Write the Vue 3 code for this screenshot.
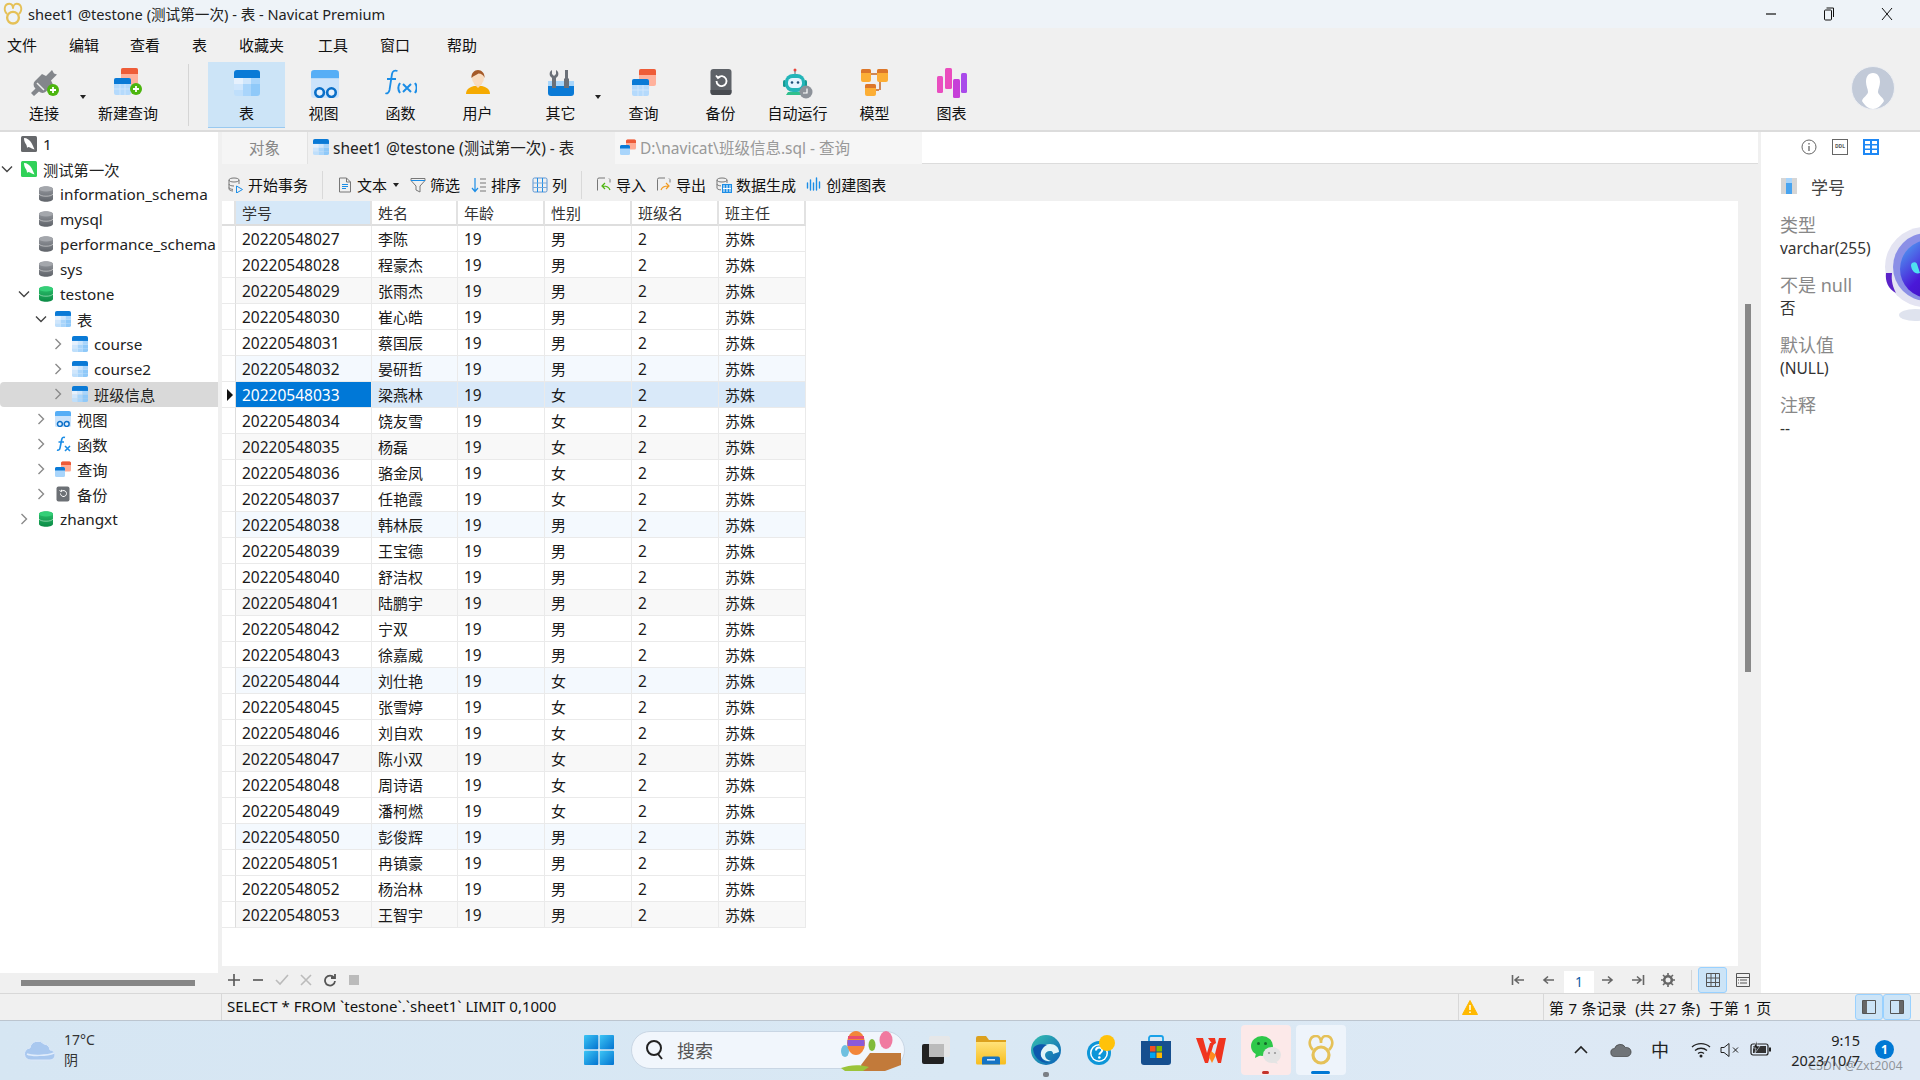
<script setup>
const menus = [
  { text: '文件', cls: 'm1' }, { text: '编辑', cls: 'm7' }, { text: '查看', cls: 'm2' }, { text: '表', cls: 'm3' },
  { text: '收藏夹', cls: 'm3' }, { text: '工具', cls: 'm4' }, { text: '窗口', cls: 'm5' }, { text: '帮助', cls: 'm6' }
]

const tools = [
  { icon: 't-tbl', text: '表', active: true },
  { icon: 't-view', text: '视图' },
  { icon: 't-fx', text: '函数' },
  { icon: 't-user', text: '用户' },
  { icon: 't-other', text: '其它', wide: true },
  { icon: 't-qry', text: '查询' },
  { icon: 't-bak', text: '备份' },
  { icon: 't-bot', text: '自动运行' },
  { icon: 't-model', text: '模型' },
  { icon: 't-chart', text: '图表' }
]

const tree = [
  { text: '1', lv: 0, icon: 'conn-grey' },
  { text: '测试第一次', lv: 0, icon: 'conn-green', chev: 'down' },
  { text: 'information_schema', lv: 1, icon: 'db-grey' },
  { text: 'mysql', lv: 1, icon: 'db-grey' },
  { text: 'performance_schema', lv: 1, icon: 'db-grey' },
  { text: 'sys', lv: 1, icon: 'db-grey' },
  { text: 'testone', lv: 1, icon: 'db-green', chev: 'down' },
  { text: '表', lv: 2, icon: 'tbl', chev: 'down' },
  { text: 'course', lv: 3, icon: 'tbl', chev: 'right' },
  { text: 'course2', lv: 3, icon: 'tbl', chev: 'right' },
  { text: '班级信息', lv: 3, icon: 'tbl', chev: 'right', selected: true },
  { text: '视图', lv: 2, icon: 'view', chev: 'right' },
  { text: '函数', lv: 2, icon: 'fx-s', chev: 'right' },
  { text: '查询', lv: 2, icon: 'qry-s', chev: 'right' },
  { text: '备份', lv: 2, icon: 'bak-s', chev: 'right' },
  { text: 'zhangxt', lv: 1, icon: 'db-green', chev: 'right' }
]

const actions = [
  [{ icon: 'a-tx', text: '开始事务' }],
  [
    { icon: 'a-doc', text: '文本', arrow: true },
    { icon: 'a-filter', text: '筛选' },
    { icon: 'a-sort', text: '排序' },
    { icon: 'a-cols', text: '列' }
  ],
  [
    { icon: 'a-imp', text: '导入' },
    { icon: 'a-exp', text: '导出' },
    { icon: 'a-gen', text: '数据生成' },
    { icon: 'a-wave', text: '创建图表' }
  ]
]

const columns = ['学号', '姓名', '年龄', '性别', '班级名', '班主任']

const students = [
  ['李陈', '男'], ['程豪杰', '男'], ['张雨杰', '男'], ['崔心皓', '男'], ['蔡国辰', '男'], ['晏研哲', '男'],
  ['梁燕林', '女'], ['饶友雪', '女'], ['杨磊', '女'], ['骆金凤', '女'], ['任艳霞', '女'], ['韩林辰', '男'],
  ['王宝德', '男'], ['舒洁权', '男'], ['陆鹏宇', '男'], ['宁双', '男'], ['徐嘉威', '男'], ['刘仕艳', '女'],
  ['张雪婷', '女'], ['刘自欢', '女'], ['陈小双', '女'], ['周诗语', '女'], ['潘柯燃', '女'], ['彭俊辉', '男'],
  ['冉镇豪', '男'], ['杨治林', '男'], ['王智宇', '男']
]

const rows = students.map((s, i) => ({
  id: String(20220548027 + i),
  name: s[0],
  sex: s[1],
  selected: i === 6,
  tint: i % 6 === 2 ? 'grey' : i % 6 === 5 ? 'blue' : ''
}))

const details = [
  { label: '类型', value: 'varchar(255)' },
  { label: '不是 null', value: '否' },
  { label: '默认值', value: '(NULL)' },
  { label: '注释', value: '--' }
]

const taskIcons = [
  { icon: 'b-task' }, { icon: 'b-folder' }, { icon: 'b-edge', dot: 'grey' }, { icon: 'b-help' },
  { icon: 'b-store' }, { icon: 'b-wps' }, { icon: 'b-wechat', cls: 'pink', dot: 'red' }, { icon: 'nav', cls: 'open', dot: 'blue' }
]
</script>

<template>
  <div class="screen">
    <svg class="defs" width="0" height="0">
      <defs>
        <linearGradient id="gGrey" x1="0" y1="0" x2="0" y2="1"><stop offset="0" stop-color="#9a9da3"/><stop offset="1" stop-color="#5f6369"/></linearGradient>
        <linearGradient id="gGreen" x1="0" y1="0" x2="0" y2="1"><stop offset="0" stop-color="#2fc46f"/><stop offset="1" stop-color="#0b8a45"/></linearGradient>
        <linearGradient id="gEdge" x1="0" y1="0" x2="1" y2="1"><stop offset="0" stop-color="#35c1b0"/><stop offset="1" stop-color="#0a5fb8"/></linearGradient>
        <linearGradient id="gFolder" x1="0" y1="0" x2="0" y2="1"><stop offset="0" stop-color="#ffe27a"/><stop offset="1" stop-color="#f7bd1e"/></linearGradient>
        <linearGradient id="gWin" x1="0" y1="0" x2="1" y2="1"><stop offset="0" stop-color="#3cc5f5"/><stop offset="1" stop-color="#0373d0"/></linearGradient>
        <linearGradient id="gBot" x1="0" y1="0" x2="1" y2="1"><stop offset="0" stop-color="#4fb0f5"/><stop offset="0.5" stop-color="#4a18d8"/><stop offset="1" stop-color="#3a10b0"/></linearGradient>
      </defs>

      <symbol id="tbl" viewBox="0 0 26 26">
        <path d="M3 0h20a3 3 0 0 1 3 3v5H0V3a3 3 0 0 1 3-3z" fill="#0a7ad6"/>
        <path d="M0 8h9v6H0z" fill="#e6f1fd"/><path d="M9 8h8v6H9z" fill="#cfe6fc"/><path d="M17 8h9v6h-9z" fill="#a9d5fb"/>
        <path d="M0 14h9v6H0z" fill="#cfe6fc"/><path d="M9 14h8v6H9z" fill="#a9d5fb"/><path d="M17 14h9v6h-9z" fill="#8fc9f9"/>
        <path d="M0 20h9v6H3a3 3 0 0 1-3-3z" fill="#bfdffb"/><path d="M9 20h8v6H9z" fill="#a9d5fb"/><path d="M17 20h9v3a3 3 0 0 1-3 3h-6z" fill="#8fc9f9"/>
      </symbol>
      <symbol id="view" viewBox="0 0 26 26">
        <path d="M3 0h20a3 3 0 0 1 3 3v5H0V3a3 3 0 0 1 3-3z" fill="#56aef6"/>
        <path d="M0 8h26v15a3 3 0 0 1-3 3H3a3 3 0 0 1-3-3z" fill="#cbe3fb"/>
        <circle cx="8" cy="21" r="4" fill="#e6f1fd" stroke="#0a6fc8" stroke-width="2.400"/>
        <circle cx="19" cy="21" r="4" fill="#e6f1fd" stroke="#0a6fc8" stroke-width="2.400"/>
      </symbol>
      <symbol id="fx-s" viewBox="0 0 16 16">
        <path d="M10 1.500c-2-.6-3 .4-3.300 2L5 12c-.4 2-1.600 2.500-3 2M3.500 6h5.500" fill="none" stroke="#1b8de6" stroke-width="1.600"/>
        <path d="M10 10l5 5M15 10l-5 5" stroke="#1b8de6" stroke-width="1.600"/>
      </symbol>
      <symbol id="qry-s" viewBox="0 0 16 16">
        <rect x="6" y="0.500" width="10" height="10" rx="1.500" fill="#ffab94"/><path d="M6 2a1.500 1.500 0 0 1 1.500-1.500h7A1.500 1.500 0 0 1 16 2v2H6z" fill="#ec5a38"/>
        <rect x="0" y="6" width="10" height="10" rx="1.500" fill="#a9d5fb"/><path d="M0 7.500A1.500 1.500 0 0 1 1.500 6h7A1.500 1.500 0 0 1 10 7.500V9.500H0z" fill="#0a7ad6"/>
      </symbol>
      <symbol id="bak-s" viewBox="0 0 16 16">
        <rect x="1.500" y="0.500" width="13" height="15" rx="2" fill="#6c7075"/>
        <path d="M5.500 7.500a3 3 0 1 0 1-2.200M4.500 4.500l1.800 1.200 .4-2" fill="none" stroke="#fff" stroke-width="1"/>
      </symbol>
      <symbol id="conn-grey" viewBox="0 0 16 16">
        <rect width="16" height="16" rx="1.500" fill="#66686b"/>
        <path d="M3 2c3 0 6 2 7.500 5 1 2 2 4 3 6.500-2-1-3.500-1-4.500-2C7 10 6 12 6 12c0-2-.5-3-1.500-4.500C3.500 6 3 4 3 2z" fill="#fff"/>
      </symbol>
      <symbol id="conn-green" viewBox="0 0 16 16">
        <rect width="16" height="16" rx="1.500" fill="#30d158"/>
        <path d="M3 2c3 0 6 2 7.500 5 1 2 2 4 3 6.500-2-1-3.500-1-4.500-2C7 10 6 12 6 12c0-2-.5-3-1.500-4.500C3.500 6 3 4 3 2z" fill="#fff"/>
      </symbol>
      <symbol id="db-grey" viewBox="0 0 16 16">
        <path d="M1 3c0-1.600 3-2.800 7-2.800s7 1.200 7 2.800v10c0 1.600-3 2.800-7 2.800s-7-1.200-7-2.800z" fill="url(#gGrey)"/>
        <ellipse cx="8" cy="3" rx="7" ry="2.600" fill="#a4a7ac"/>
        <path d="M1 8c1 1.500 3.500 2.200 7 2.200s6-.7 7-2.200" fill="none" stroke="#e4e4e4" stroke-width=".6"/>
      </symbol>
      <symbol id="db-green" viewBox="0 0 16 16">
        <path d="M1 3c0-1.600 3-2.800 7-2.800s7 1.200 7 2.800v10c0 1.600-3 2.800-7 2.800s-7-1.200-7-2.800z" fill="url(#gGreen)"/>
        <ellipse cx="8" cy="3" rx="7" ry="2.600" fill="#35cf78"/>
        <path d="M1 8c1 1.500 3.500 2.200 7 2.200s6-.7 7-2.200" fill="none" stroke="#c9f0d9" stroke-width=".6"/>
      </symbol>
      <symbol id="chev-down" viewBox="0 0 12 12"><path d="M1 3.500L6 8.500l5-5" fill="none" stroke="#444" stroke-width="1.400"/></symbol>
      <symbol id="chev-right" viewBox="0 0 12 12"><path d="M3.500 1L8.500 6l-5 5" fill="none" stroke="#8a8a8a" stroke-width="1.400"/></symbol>

      <symbol id="t-conn" viewBox="0 0 32 32">
        <path d="M24 2l-6 6-4-2-7 7a5 5 0 0 0 0 7l.5.500L3 25l3 3 5-4.500a5 5 0 0 0 7 0l7-7-2-4 6-6-3-1z" fill="#83868b"/>
        <path d="M9 15l7 7" stroke="#f0f0f0" stroke-width="1.500"/>
        <circle cx="25" cy="22" r="6" fill="#4cb50e"/><path d="M25 19v6M22 22h6" stroke="#fff" stroke-width="1.800"/>
      </symbol>
      <symbol id="t-new" viewBox="0 0 32 32">
        <rect x="9" y="0" width="17" height="17" rx="2" fill="#ffb19c"/><path d="M9 2a2 2 0 0 1 2-2h13a2 2 0 0 1 2 2v4H9z" fill="#ee5c38"/>
        <rect x="2" y="10" width="17" height="17" rx="2" fill="#b5dafc"/><path d="M2 12a2 2 0 0 1 2-2h13a2 2 0 0 1 2 2v4H2z" fill="#0a7ad6"/>
        <path d="M8 16v11M13 16v11M2 21h17" stroke="#d7eafd" stroke-width=".8"/>
        <circle cx="24" cy="21" r="6" fill="#4cb50e"/><path d="M24 18v6M21 21h6" stroke="#fff" stroke-width="1.800"/>
      </symbol>
      <symbol id="t-tbl" viewBox="0 0 32 32"><use href="#tbl" x="3" y="2" width="26" height="26"/></symbol>
      <symbol id="t-view" viewBox="0 0 32 32"><use href="#view" x="3" y="2" width="28" height="28"/></symbol>
      <symbol id="t-fx" viewBox="0 0 32 32">
        <path d="M12.500 3c-3-1-5 0-5.500 3L4.500 22c-.6 3-2.500 4-4 3M2 11h9" fill="none" stroke="#1b8de6" stroke-width="1.800"/>
        <path d="M15 15c-2 3-2 7 0 10M30 15c2 3 2 7 0 10M18 16l8 8M26 16l-8 8" fill="none" stroke="#1b8de6" stroke-width="2"/>
      </symbol>
      <symbol id="t-user" viewBox="0 0 32 32">
        <path d="M4 26c0-5 4-7 8-8h8c4 1 8 3 8 8z" fill="#f5aa00"/>
        <path d="M12 16l4 4 4-4v-2h-8z" fill="#f8d9b8"/>
        <ellipse cx="16" cy="10" rx="6" ry="7" fill="#f9dcc0"/>
        <path d="M9.500 10c-.5-5 3-8 6.500-8s7 3 6.500 8c-1-3-3-4.500-6-4.500-2 1.500-5 2-7 4.500z" fill="#a55a28"/>
      </symbol>
      <symbol id="t-other" viewBox="0 0 32 32">
        <path d="M3 13h26v6H3z" fill="#a8d6fb"/>
        <path d="M3 18h26v7a3 3 0 0 1-3 3H6a3 3 0 0 1-3-3z" fill="#0a7ad6"/>
        <path d="M11 2v4l-2 2-2-2V2C5 3 4 5 5 8l2 2v10h4V10l2-2c1-3 0-5-2-6z" fill="#6a7078"/>
        <path d="M20 2h3v8l1 1v9h-5v-9l1-1z" fill="#6a7078"/>
      </symbol>
      <symbol id="t-qry" viewBox="0 0 32 32">
        <rect x="11" y="1" width="17" height="17" rx="2" fill="#ffb19c"/><path d="M11 3a2 2 0 0 1 2-2h13a2 2 0 0 1 2 2v4H11z" fill="#ee5c38"/>
        <rect x="4" y="11" width="17" height="17" rx="2" fill="#b5dafc"/><path d="M4 13a2 2 0 0 1 2-2h13a2 2 0 0 1 2 2v4H4z" fill="#0a7ad6"/>
        <path d="M10 17v11M15 17v11M4 22h17" stroke="#d7eafd" stroke-width=".8"/>
      </symbol>
      <symbol id="t-bak" viewBox="0 0 32 32">
        <rect x="5.500" y="1" width="21" height="26" rx="3" fill="#5e6268"/>
        <path d="M5.500 22h21v2a3 3 0 0 1-3 3h-15a3 3 0 0 1-3-3z" fill="#484b50"/>
        <path d="M11.500 13a5 5 0 1 0 1.500-3.500M11 7.500l2 2.500 2.500-1.500" fill="none" stroke="#fff" stroke-width="1.800"/>
      </symbol>
      <symbol id="t-bot" viewBox="0 0 32 32">
        <circle cx="13" cy="2" r="1.500" fill="#e9443a"/><path d="M13 3v4" stroke="#5d6670" stroke-width="1"/>
        <rect x="1" y="12" width="3" height="7" rx="1.500" fill="#159a92"/><rect x="22" y="12" width="3" height="7" rx="1.500" fill="#159a92"/>
        <rect x="3" y="6" width="20" height="18" rx="8" fill="#23b5b8"/>
        <rect x="6" y="10" width="14" height="10" rx="4.500" fill="#e6f5ff"/>
        <circle cx="10" cy="14.500" r="1.300" fill="#1c4f78"/><circle cx="16" cy="14.500" r="1.300" fill="#1c4f78"/>
        <path d="M6 24h14l2 3H4z" fill="#2fbf8c"/>
        <circle cx="24" cy="24" r="6.500" fill="#8d9299"/><path d="M25 20.500V25h-4" fill="none" stroke="#fff" stroke-width="1.200"/>
      </symbol>
      <symbol id="t-model" viewBox="0 0 32 32">
        <path d="M11 6h11M9 22h11M21 12v10" stroke="#c5641f" stroke-width="1.500" fill="none"/>
        <rect x="2" y="1" width="10" height="13" rx="2" fill="#fcae35"/><path d="M2 3a2 2 0 0 1 2-2h6a2 2 0 0 1 2 2v2H2z" fill="#dc762a"/>
        <rect x="18" y="1" width="11" height="13" rx="2" fill="#fcae35"/><path d="M18 3a2 2 0 0 1 2-2h7a2 2 0 0 1 2 2v2H18z" fill="#dc762a"/>
        <rect x="6" y="16" width="11" height="12" rx="2" fill="#fcae35"/><path d="M6 18a2 2 0 0 1 2-2h7a2 2 0 0 1 2 2v2H6z" fill="#dc762a"/>
      </symbol>
      <symbol id="t-chart" viewBox="0 0 32 32">
        <rect x="1" y="8" width="6" height="17" rx="1.500" fill="#e94ec0"/>
        <rect x="9" y="0" width="7" height="21" rx="1.500" fill="#ea4cbd"/>
        <rect x="17" y="11" width="7" height="19" rx="1.500" fill="#c63fd8"/>
        <rect x="25" y="5" width="6" height="20" rx="1.500" fill="#a94aea"/>
      </symbol>

      <symbol id="a-tx" viewBox="0 0 16 16">
        <path d="M1 3c0-1.200 2-2 5-2s5 .8 5 2v4M1 3v9c0 1.100 1.800 1.800 4 2M1 3c0 1.200 2 2 5 2s5-.8 5-2M1 7c0 1.200 2 2 5 2M1 10.500c0 1 1.500 1.700 4 1.900" fill="none" stroke="#777" stroke-width="1"/>
        <path d="M8.500 9l6 3.500-6 3.500z" fill="none" stroke="#1b8de6" stroke-width="1"/>
      </symbol>
      <symbol id="a-doc" viewBox="0 0 16 16">
        <path d="M2.500 1h7l4 4v10h-11zM9.500 1v4h4" fill="none" stroke="#777" stroke-width="1"/>
        <path d="M5 7.500h6M5 9.500h6M5 11.500h4" stroke="#1b8de6" stroke-width="1"/>
      </symbol>
      <symbol id="a-filter" viewBox="0 0 16 16">
        <path d="M1 1.500h14v2L10 9v6l-4-2V9L1 3.500z" fill="none" stroke="#777" stroke-width="1"/>
        <path d="M1 3.500h14" stroke="#1b8de6" stroke-width="1"/>
      </symbol>
      <symbol id="a-sort" viewBox="0 0 16 16">
        <path d="M4 1v13M1 11l3 3.500L7 11" fill="none" stroke="#1b8de6" stroke-width="1.200"/>
        <path d="M9 2h6M9 6h6M9 10h6M9 14h6" stroke="#777" stroke-width="1"/>
      </symbol>
      <symbol id="a-cols" viewBox="0 0 16 16">
        <rect x="1" y="1" width="14" height="14" rx="1.500" fill="none" stroke="#5a95d4" stroke-width="1"/>
        <path d="M5.500 1v14M10.500 1v14" stroke="#1b8de6" stroke-width="1"/><path d="M1 6h14M1 10.500h14" stroke="#7aa9da" stroke-width="1"/>
      </symbol>
      <symbol id="a-imp" viewBox="0 0 16 16">
        <path d="M9 1H3a1.500 1.500 0 0 0-1.500 1.500v11M13 1.500l1 1v3" fill="none" stroke="#777" stroke-width="1"/>
        <path d="M14 13c-1-3-3-4-7-4M9 6L6 9l3 3" fill="none" stroke="#4cb50e" stroke-width="1.200"/>
      </symbol>
      <symbol id="a-exp" viewBox="0 0 16 16">
        <path d="M9 1H3a1.500 1.500 0 0 0-1.500 1.500v11M13 1.500l1 1v3" fill="none" stroke="#777" stroke-width="1"/>
        <path d="M5 13c1-3 3-4 7-4M10 6l3 3-3 3" fill="none" stroke="#f29a1f" stroke-width="1.200"/>
      </symbol>
      <symbol id="a-gen" viewBox="0 0 16 16">
        <path d="M1 3c0-1.200 2-2 5-2s5 .8 5 2v3M1 3v8c0 1 1.500 1.700 4 1.900M1 3c0 1.200 2 2 5 2s5-.8 5-2M1 7c0 1 1.500 1.700 4 1.900" fill="none" stroke="#777" stroke-width="1"/>
        <rect x="6" y="7" width="10" height="9" fill="#1b8de6"/><path d="M8 8v7M11 8v7M14 8v7M7 11.500h8" stroke="#fff" stroke-width="1"/>
      </symbol>
      <symbol id="a-wave" viewBox="0 0 16 16">
        <path d="M1.500 6v5M4.500 3v10M7.500 6v7M10.500 1v12M13.500 5v6" stroke="#1b8de6" stroke-width="1.400" stroke-linecap="round"/>
      </symbol>

      <symbol id="nav" viewBox="0 0 30 30">
        <path d="M7 15C1 9 4 1 10 1c3 0 5 3 5 7 0-4 2-7 5-7 6 0 9 8 3 14" fill="none" stroke="#e5c158" stroke-width="2.600"/>
        <circle cx="15" cy="20" r="8" fill="none" stroke="#e5c158" stroke-width="3.200"/>
      </symbol>
      <symbol id="b-win" viewBox="0 0 30 30">
        <rect x="0" y="0" width="14.300" height="14.300" rx="1" fill="url(#gWin)"/><rect x="15.700" y="0" width="14.300" height="14.300" rx="1" fill="url(#gWin)"/>
        <rect x="0" y="15.700" width="14.300" height="14.300" rx="1" fill="url(#gWin)"/><rect x="15.700" y="15.700" width="14.300" height="14.300" rx="1" fill="url(#gWin)"/>
      </symbol>
      <symbol id="b-task" viewBox="0 0 30 30">
        <rect x="1" y="9" width="22" height="20" rx="2" fill="#222"/>
        <rect x="8" y="1" width="21" height="21" rx="2" fill="#e7e7e7" opacity=".9"/>
        <rect x="8" y="9" width="15" height="13" fill="#bbb"/>
      </symbol>
      <symbol id="b-folder" viewBox="0 0 30 30">
        <path d="M0 3a2 2 0 0 1 2-2h8l3 4h17v5H0z" fill="#dca11e"/>
        <path d="M0 7h30v21a1.500 1.500 0 0 1-1.500 1.500h-27A1.500 1.500 0 0 1 0 28z" fill="url(#gFolder)"/>
        <path d="M6 29.500v-6a2 2 0 0 1 2-2h14a2 2 0 0 1 2 2v6z" fill="#1473c4"/><rect x="11" y="24" width="8" height="1.600" fill="#cfe6fc"/>
      </symbol>
      <symbol id="b-edge" viewBox="0 0 30 30">
        <circle cx="15" cy="15" r="15" fill="url(#gEdge)"/>
        <path d="M28 17c0-5-4-8-9-8-6 0-10 4-10 9 0 5 5 9 11 8-4-1-6-3-6-6 0-2 2-4 5-4s3 2 3 3z" fill="#dff4f8"/>
        <path d="M2 14C3 24 12 30 20 27c-5 1-9-2-10-6-1-5 2-9 6-11-6-2-13 0-14 4z" fill="#0d58ad"/>
      </symbol>
      <symbol id="b-help" viewBox="0 0 30 30">
        <circle cx="13" cy="18" r="12" fill="#0d96d8"/><circle cx="13" cy="18" r="9" fill="#fff"/><circle cx="13" cy="18" r="7.500" fill="#0d96d8"/>
        <path d="M10 15.500c0-2 1.500-3 3.200-3s3 1.200 3 2.800c0 2-2.800 2.500-2.800 4.500" fill="none" stroke="#fff" stroke-width="2"/><circle cx="13.300" cy="22.500" r="1.300" fill="#fff"/>
        <circle cx="21" cy="8" r="8" fill="#ffc20a"/>
      </symbol>
      <symbol id="b-store" viewBox="0 0 30 30">
        <path d="M8 6V3a2 2 0 0 1 2-2h10a2 2 0 0 1 2 2v3" fill="none" stroke="#18a1e8" stroke-width="1.800"/>
        <path d="M0 6h30v21a3 3 0 0 1-3 3H3a3 3 0 0 1-3-3z" fill="#164f8f"/>
        <rect x="9" y="11" width="5.500" height="5.500" fill="#f25022"/><rect x="15.500" y="11" width="5.500" height="5.500" fill="#7fba00"/>
        <rect x="9" y="17.500" width="5.500" height="5.500" fill="#00a4ef"/><rect x="15.500" y="17.500" width="5.500" height="5.500" fill="#ffb900"/>
      </symbol>
      <symbol id="b-wps" viewBox="0 0 30 30">
        <path d="M0 3h7l4 15 3-10h4l-6 20H9z" fill="#f0341f"/>
        <path d="M12 3h7l1 5-3 2zM30 3h-7l-4 16 3 9h3z" fill="#f0341f"/>
        <path d="M13 22l2-6 5 4-4 8z" fill="#ff8a1e"/>
      </symbol>
      <symbol id="b-wechat" viewBox="0 0 30 30">
        <ellipse cx="11" cy="11" rx="11" ry="10" fill="#2ec84a"/><path d="M5 18l-1 5 6-3z" fill="#2ec84a"/>
        <circle cx="7.500" cy="8.500" r="1.500" fill="#146b2a"/><circle cx="14.500" cy="8.500" r="1.500" fill="#146b2a"/>
        <ellipse cx="21" cy="20" rx="9" ry="8" fill="#e4e4e4"/><path d="M25 26l2 3-6-2z" fill="#e4e4e4"/>
        <circle cx="18" cy="18" r="1.100" fill="#999"/><circle cx="24" cy="18" r="1.100" fill="#999"/>
      </symbol>
      <symbol id="b-balloons" viewBox="0 0 60 40">
        <ellipse cx="4" cy="20" rx="4" ry="6" fill="#6fc0e0"/>
        <ellipse cx="15" cy="12" rx="9" ry="12" fill="#f2863a"/><path d="M6.500 9h17v6h-17z" fill="#8a5ad8"/><path d="M7 5h16v3H7z" fill="#e84c6f"/>
        <ellipse cx="31" cy="14" rx="3.500" ry="6" fill="#7fbb3a"/>
        <ellipse cx="45" cy="9" rx="6.500" ry="9" fill="#f07aa0"/>
        <path d="M20 34l9-12h31v12L44 40H22z" fill="#c27a3a"/>
        <path d="M0 37c8-3 18-4 28-1L22 40H4z" fill="#9bc43a"/>
      </symbol>
      <symbol id="cloud" viewBox="0 0 32 22">
        <path d="M7 21a6 6 0 0 1-1-12 8 8 0 0 1 14-4 7 7 0 0 1 6 6 5 5 0 0 1 0 10z" fill="#a9c8ef" stroke="#dbe8f9" stroke-width="1"/>
        <path d="M3 15c4 2 20 2 27-1" fill="none" stroke="#e0ecfb" stroke-width="1.500"/>
      </symbol>
    </svg>

    <header class="titlebar">
      <svg class="title-logo"><use href="#nav"/></svg>
      <span class="title-text">sheet1 @testone (测试第一次) - 表 - Navicat Premium</span>
      <div class="win-btns">
        <button class="win-btn"><svg width="12" height="12"><path d="M1 6h10" stroke="#111" stroke-width="1.200"/></svg></button>
        <button class="win-btn"><svg width="12" height="14"><rect x="1.500" y="3" width="7" height="10" rx="1" fill="none" stroke="#111"/><path d="M3.500 1h7v9" fill="none" stroke="#111"/></svg></button>
        <button class="win-btn"><svg width="14" height="14"><path d="M2 1l10 12M12 1L2 13" stroke="#111" stroke-width="1"/></svg></button>
      </div>
    </header>

    <nav class="menubar">
      <span v-for="m in menus" :key="m.text" class="menu-item" :class="m.cls">{{ m.text }}</span>
    </nav>

    <div class="toolbar">
      <button class="tool conn">
        <svg class="tool-icon"><use href="#t-conn"/></svg>
        <span>连接</span>
        <i class="drop"></i>
      </button>
      <button class="tool newq">
        <svg class="tool-icon"><use href="#t-new"/></svg>
        <span>新建查询</span>
      </button>
      <div class="tool-sep"></div>
      <button
        v-for="t in tools"
        :key="t.text"
        class="tool"
        :class="{ active: t.active, wide: t.wide }"
      >
        <svg class="tool-icon"><use :href="'#' + t.icon"/></svg>
        <span>{{ t.text }}</span>
        <i v-if="t.wide" class="drop"></i>
      </button>
      <div class="avatar">
        <svg width="44" height="44" viewBox="0 0 44 44">
          <circle cx="22" cy="22" r="21.500" fill="#c2cad8" stroke="#eceef2"/>
          <path d="M22 7c-5 0-7 4-7 9 0 4 2 7 2 10 0 3-5 5-6 9 3 5 7 8 11 8s8-3 11-8c-1-4-6-6-6-9 0-3 2-6 2-10 0-5-2-9-7-9z" fill="#fff"/>
        </svg>
      </div>
    </div>

    <div class="workspace">
      <aside class="sidebar">
        <div class="tree">
          <div
            v-for="n in tree"
            :key="n.text + n.lv"
            class="tree-row"
            :class="['lv' + n.lv, { selected: n.selected }]"
          >
            <svg class="chev"><use v-if="n.chev" :href="'#chev-' + n.chev"/></svg>
            <svg class="tree-icon"><use :href="'#' + n.icon"/></svg>
            <span>{{ n.text }}</span>
          </div>
        </div>
        <div class="side-foot"><div class="hscroll"></div></div>
      </aside>

      <main class="center">
        <div class="tabs">
          <div class="tab objects">对象</div>
          <div class="tab current">
            <svg class="tab-icon"><use href="#tbl"/></svg>
            sheet1 @testone (测试第一次) - 表
          </div>
          <div class="tab other">
            <svg class="tab-icon"><use href="#qry-s"/></svg>
            D:\navicat\班级信息.sql - 查询
          </div>
        </div>

        <div class="actions">
          <template v-for="(group, g) in actions" :key="g">
            <div v-if="g > 0" class="act-sep"></div>
            <div class="act-group" :class="'group' + g">
              <div v-for="a in group" :key="a.text" class="act" :class="{ 'with-arrow': a.arrow }">
                <svg class="act-icon"><use :href="'#' + a.icon"/></svg>
                <span>{{ a.text }}</span>
                <i v-if="a.arrow" class="drop small"></i>
              </div>
            </div>
          </template>
        </div>

        <div class="grid-area">
          <div class="grid-wrap">
            <div class="grid-row head">
              <div class="cell ind"></div>
              <div v-for="(c, i) in columns" :key="c" class="cell" :class="{ sel: i === 0 }">{{ c }}</div>
            </div>
            <div
              v-for="r in rows"
              :key="r.id"
              class="grid-row"
              :class="[r.tint, { selected: r.selected }]"
            >
              <div class="cell ind"><i v-if="r.selected" class="pointer"></i></div>
              <div class="cell num id">{{ r.id }}</div>
              <div class="cell">{{ r.name }}</div>
              <div class="cell num">19</div>
              <div class="cell">{{ r.sex }}</div>
              <div class="cell num">2</div>
              <div class="cell">苏姝</div>
            </div>
          </div>
          <div class="vscroll-track"><div class="vscroll"></div></div>
        </div>

        <div class="grid-foot">
          <div class="foot-left">
            <svg width="14" height="14"><path d="M7 1v12M1 7h12" stroke="#555" stroke-width="1.600"/></svg>
            <svg width="14" height="14"><path d="M2 7h10" stroke="#555" stroke-width="1.600"/></svg>
            <svg width="14" height="14"><path d="M1 7l4 4 8-9" fill="none" stroke="#bbb" stroke-width="1.600"/></svg>
            <svg width="14" height="14"><path d="M2 2l10 10M12 2L2 12" stroke="#bbb" stroke-width="1.600"/></svg>
            <svg width="14" height="14"><path d="M11 4.500A5 5 0 1 0 12 8M12 1v4H8" fill="none" stroke="#555" stroke-width="1.800"/></svg>
            <svg width="14" height="14"><rect x="2" y="2" width="10" height="10" fill="#bbb"/></svg>
          </div>
          <div class="foot-right">
            <svg width="14" height="14"><path d="M1.500 2v10M13 7H4M8 3.500L4 7l4 3.500" fill="none" stroke="#666" stroke-width="1.600"/></svg>
            <svg width="14" height="14"><path d="M13 7H3M7 3.500L3 7l4 3.500" fill="none" stroke="#666" stroke-width="1.600"/></svg>
            <div class="page-box">1</div>
            <svg class="after-box" width="14" height="14"><path d="M1 7h10M7 3.500L11 7l-4 3.500" fill="none" stroke="#666" stroke-width="1.600"/></svg>
            <svg width="14" height="14"><path d="M12.500 2v10M1 7h9M6 3.500L10 7l-4 3.500" fill="none" stroke="#666" stroke-width="1.600"/></svg>
            <svg width="14" height="14" viewBox="0 0 14 14"><circle cx="7" cy="7" r="3.800" fill="none" stroke="#666" stroke-width="2.600"/><path d="M7 0v2.500M7 11.500V14M0 7h2.500M11.500 7H14M2 2l1.800 1.800M10.200 10.200L12 12M12 2l-1.800 1.800M3.800 10.200L2 12" stroke="#666" stroke-width="1.600"/></svg>
            <div class="foot-sep"></div>
            <div class="view-btn on">
              <svg width="14" height="14"><path d="M.5.5h13v13H.5zM.5 5h13M.5 9.500h13M5 .5v13M9.500 .5v13" fill="none" stroke="#555"/></svg>
            </div>
            <div class="view-btn plain">
              <svg width="14" height="14"><path d="M.5.5h13v13H.5zM.5 4.500h13M4 7h7M4 10h7M2 7h1M2 10h1" fill="none" stroke="#555"/></svg>
            </div>
          </div>
        </div>
      </main>

      <aside class="details">
        <div class="detail-tabs">
          <svg width="16" height="16"><circle cx="8" cy="8" r="7" fill="none" stroke="#666"/><path d="M8 7v5M8 4v1.500" stroke="#666" stroke-width="1.300"/></svg>
          <div class="ddl"><span>DDL</span></div>
          <svg width="16" height="16"><path d="M0 0h16v16H0z" fill="#1e88f5"/><path d="M2 2h5v3H2zM9 2h5v3H9zM2 6.500h5v3H2zM9 6.500h5v3H9zM2 11h5v3H2zM9 11h5v3H9z" fill="#fff"/></svg>
        </div>
        <div class="field-name">
          <svg width="16" height="16">
            <path d="M0 0h5v16H0zM11 0h5v16h-5z" fill="#d6d6d6"/><path d="M5 0h6v5H5z" fill="#a9d5fb"/><path d="M5 5h6v11H5z" fill="#48a4f0"/>
          </svg>
          <span>学号</span>
        </div>
        <div v-for="d in details" :key="d.label" class="detail">
          <div class="detail-label">{{ d.label }}</div>
          <div class="detail-value">{{ d.value }}</div>
        </div>
        <svg class="assistant" width="35" height="100" viewBox="0 0 35 100">
          <ellipse cx="30" cy="92" rx="16" ry="6" fill="#dfe3ee"/>
          <circle cx="40" cy="44" r="40" fill="#e4e4f2"/>
          <path d="M1 50c-1 8 2 16 10 20-3-6-5-12-4-20z" fill="#5a22c8"/>
          <circle cx="42" cy="44" r="34" fill="#8b8fe6"/>
          <circle cx="44" cy="46" r="29" fill="url(#gBot)"/>
          <path d="M26 42c0-3 5-4 6-1l3 9c-5 2-9-3-9-8z" fill="#4fe0f0"/>
        </svg>
      </aside>
    </div>

    <footer class="statusbar">
      <div class="sql">SELECT * FROM `testone`.`sheet1` LIMIT 0,1000</div>
      <div class="warn">
        <svg width="16" height="15"><path d="M8 .5L15.500 14.500H.5z" fill="#ffb900" stroke="#ffb900" stroke-linejoin="round"/><path d="M8 5v5M8 11.500v1.500" stroke="#fff" stroke-width="1.500"/></svg>
      </div>
      <div class="records">第 7 条记录&nbsp; (共 27 条)&nbsp; 于第 1 页</div>
      <div class="panel-btn"><svg width="14" height="14"><path d="M.5.5h13v13H.5z" fill="none" stroke="#555"/><path d="M1 1h4v12H1z" fill="#666"/></svg></div>
      <div class="panel-btn"><svg width="14" height="14"><path d="M.5.5h13v13H.5z" fill="none" stroke="#555"/><path d="M9 1h4v12H9z" fill="#666"/></svg></div>
    </footer>

    <div class="taskbar">
      <div class="weather">
        <svg width="32" height="22"><use href="#cloud"/></svg>
        <div class="weather-text"><div>17°C</div><div>阴</div></div>
      </div>
      <div class="win-start"><svg width="30" height="30"><use href="#b-win"/></svg></div>
      <div class="search">
        <svg width="20" height="22" viewBox="0 0 20 22"><circle cx="9" cy="9" r="7" fill="none" stroke="#222" stroke-width="2"/><path d="M13 15l4 5" stroke="#222" stroke-width="2"/></svg>
        <span>搜索</span>
        <svg class="balloons" width="60" height="40"><use href="#b-balloons"/></svg>
      </div>
      <div class="task-icons">
        <div v-for="t in taskIcons" :key="t.icon" class="task-icon" :class="t.cls">
          <svg width="30" height="30"><use :href="'#' + t.icon"/></svg>
          <i v-if="t.dot" class="task-dot" :class="t.dot"></i>
        </div>
      </div>
      <div class="tray">
        <svg class="t-chev" width="16" height="10"><path d="M2 8l6-6 6 6" fill="none" stroke="#222" stroke-width="1.600"/></svg>
        <svg class="t-cloud" width="22" height="14" viewBox="0 0 22 14"><path d="M5 13.500a4 4 0 0 1-.5-8 6 6 0 0 1 11-1 4.500 4.500 0 0 1 2 9z" fill="#707478" stroke="#333" stroke-width=".6"/></svg>
        <span class="t-ime">中</span>
        <svg class="t-wifi" width="20" height="16" viewBox="0 0 20 16"><path d="M1 5c5-4.500 13-4.500 18 0M4 8.500c3.500-3 8.500-3 12 0M7 11.500c2-1.500 4-1.500 6 0" fill="none" stroke="#222" stroke-width="1.300"/><circle cx="10" cy="14" r="1.500" fill="#222"/></svg>
        <svg class="t-vol" width="20" height="16" viewBox="0 0 20 16"><path d="M1 5.500h3L9 1.500v13l-5-4H1z" fill="none" stroke="#222"/><path d="M13 5.500l5 5M18 5.500l-5 5" stroke="#222"/></svg>
        <svg class="t-bat" width="22" height="16" viewBox="0 0 22 16"><rect x="1" y="3" width="17" height="11" rx="2" fill="none" stroke="#222" stroke-width="1.200"/><rect x="3" y="5" width="13" height="7" fill="#333"/><rect x="19" y="6.500" width="2" height="4" fill="#222"/><path d="M7 0L3 7h3l-1 5 5-7H7z" fill="#222" stroke="#e0eaf5" stroke-width=".6"/></svg>
        <div class="clock"><div>9:15</div><div>2023/10/7</div></div>
        <div class="badge">1</div>
      </div>
      <div class="watermark">CSDN @Zxt2004</div>
    </div>
  </div>
</template>

<style scoped>
.defs { position: absolute; }

.screen {
  width: 1920px;
  height: 1080px;
  overflow: hidden;
  display: flex;
  flex-direction: column;
  background: #f0f0f0;
  color: #111;
  font-family: "Noto Sans", "Noto Sans CJK SC", sans-serif;
  font-size: 15px;
  position: relative;
}

button {
  border: 0;
  background: none;
  padding: 0;
  font: inherit;
  color: inherit;
}

.titlebar {
  height: 28px;
  flex: none;
  display: flex;
  align-items: center;
  background: #eef3f8;
  position: relative;
}
.title-logo { width: 22px; height: 24px; margin-left: 2px; flex: none; }
.title-text { margin-left: 4px; font-size: 14.6px; color: #222; white-space: nowrap; padding-bottom: 1px; }
.win-btns { margin-left: auto; padding-right: 4px; display: flex; }
.win-btn { width: 58px; height: 28px; display: flex; align-items: center; justify-content: center; }

.menubar {
  height: 34px;
  flex: none;
  display: flex;
  align-items: center;
  font-size: 15px;
  padding-bottom: 2px;
  box-sizing: border-box;
}
.menu-item { white-space: nowrap; }
.m1 { margin-left: 7px; }
.m7 { margin-left: 32px; }
.m2 { margin-left: 31px; }
.m3 { margin-left: 32px; }
.m4 { margin-left: 34px; }
.m5 { margin-left: 32px; }
.m6 { margin-left: 37px; }

.toolbar {
  height: 70px;
  flex: none;
  display: flex;
  align-items: flex-start;
  padding-left: 5px;
  border-bottom: 2px solid #dcdcdc;
  box-sizing: border-box;
  position: relative;
}
.tool {
  width: 77px;
  height: 66px;
  flex: none;
  display: flex;
  flex-direction: column;
  align-items: center;
  padding-top: 6px;
  box-sizing: border-box;
  position: relative;
  font-size: 15px;
  line-height: 20px;
}
.tool span { margin-top: 3px; white-space: nowrap; }
.tool-icon { width: 32px; height: 32px; flex: none; }
.tool.active { background: #cce4f7; border-bottom: 1px solid #99c9f0; }
.tool.wide { width: 89px; }
.tool.conn { width: 85px; padding-right: 7px; }
.tool.newq { width: 76px; }
.tool-sep { width: 1px; height: 62px; margin: 2px 19px 0 22px; background: #d5d5d5; flex: none; }
.drop {
  position: absolute;
  right: 4px;
  top: 33px;
  border: 3px solid transparent;
  border-top: 4px solid #222;
  border-bottom: 0;
}
.avatar { margin-left: auto; margin-right: 25px; margin-top: 4px; height: 44px; }

.workspace { flex: 1; min-height: 0; display: flex; }

.sidebar {
  width: 222px;
  flex: none;
  display: flex;
  flex-direction: column;
  border-right: 4px solid #f0f0f0;
  box-sizing: border-box;
}
.tree { flex: 1; background: #fff; }
.tree-row {
  height: 25px;
  display: flex;
  align-items: center;
  white-space: nowrap;
  font-size: 15.3px;
  color: #222;
  padding-bottom: 1px;
  box-sizing: border-box;
}
.tree-row.selected { background: #d9d9d9; border-radius: 4px 0 0 4px; }
.lv0 { padding-left: 1px; }
.lv1 { padding-left: 18px; }
.lv2 { padding-left: 35px; }
.lv3 { padding-left: 52px; }
.chev { width: 12px; height: 12px; margin-right: 8px; flex: none; }
.tree-icon { width: 16px; height: 16px; margin-right: 6px; flex: none; }
.side-foot { height: 20px; flex: none; }
.hscroll { width: 174px; height: 6px; margin: 7px 0 0 21px; background: #868686; }

.center { flex: 1; min-width: 0; display: flex; flex-direction: column; }

.tabs {
  height: 31px;
  flex: none;
  display: flex;
  background: #fff;
  border-bottom: 1px solid #dcdcdc;
  box-sizing: content-box;
  margin-right: 3px;
}
.tab {
  display: flex;
  align-items: center;
  white-space: nowrap;
  box-sizing: border-box;
  height: 32px;
  font-size: 15.5px;
  padding-bottom: 2px;
}
.tab-icon { width: 16px; height: 16px; flex: none; margin-right: 4px; }
.objects { width: 86px; justify-content: center; background: #f5f5f5; color: #888; border-right: 1px solid #e2e2e2; }
.current { width: 307px; padding-left: 5px; background: #f0f0f0; color: #222; }
.other { width: 307px; padding-left: 5px; background: #f6f6f6; color: #999; }

.actions {
  height: 37px;
  flex: none;
  display: flex;
  align-items: center;
  padding-left: 6px;
  padding-top: 4px;
  box-sizing: border-box;
  font-size: 15px;
}
.act-group { display: flex; align-items: center; gap: 10px; }
.group1 { gap: 11px; }
.act { display: flex; align-items: center; gap: 4px; white-space: nowrap; position: relative; }
.act-icon { width: 16px; height: 16px; flex: none; }
.act.with-arrow { padding-right: 14px; margin-right: -2px; }
.drop.small { right: 2px; top: 9px; }
.act-sep { width: 1px; height: 28px; background: #d9d9d9; margin: 0 14px; }

.grid-area { flex: 1; min-height: 0; display: flex; }
.grid-wrap { width: 1516px; flex: none; background: #fff; }
.grid-row {
  display: grid;
  grid-template-columns: 14px 136px 86px repeat(4, 87px);
  height: 26px;
  width: 584px;
}
.cell {
  display: flex;
  align-items: center;
  padding: 0 0 1px 6px;
  box-sizing: border-box;
  border-right: 1px solid #eaeaea;
  border-bottom: 1px solid #eaeaea;
  white-space: nowrap;
  font-size: 15px;
  color: #1a1a1a;
}
.num { font-size: 15.5px; padding-bottom: 0; padding-top: 1px; }
.cell.ind {
  padding: 0 0 0 5px;
  background: #fff;
  border-right: 1px solid #dddddd;
}
.head { height: 25px; }
.head .cell { border-bottom: 2px solid #dedede; color: #333; border-right-width: 2px; border-right-color: #e2e2e2; }
.head .cell.sel { background: #d6e8f8; border-bottom-color: #dedede; }
.grid-row.grey .cell:not(.ind) { background: #f8f8f8; }
.grid-row.blue .cell:not(.ind) { background: #f4f9fe; }
.grid-row.selected .cell:not(.ind) { background: #d9e9f9; }
.grid-row.selected .cell.id { background: #0078d7; color: #fff; }
.pointer {
  border: 6px solid transparent;
  border-left: 6px solid #111;
  border-right: 0;
}
.vscroll-track { flex: 1; }
.vscroll { width: 6px; height: 368px; margin: 103px 0 0 7px; background: #888; }

.grid-foot {
  height: 27px;
  flex: none;
  display: flex;
  align-items: center;
  justify-content: space-between;
  margin-right: 11px;
}
.foot-left { display: flex; align-items: center; gap: 10px; padding-left: 5px; }
.foot-right { display: flex; align-items: center; }
.foot-right > * { margin-left: 16px; }
.page-box {
  width: 30px;
  height: 22px;
  background: #fff;
  margin-top: 5px;
  margin-left: 9px;
  color: #115da8;
  text-align: center;
  font-size: 14px;
  line-height: 21px;
}
.foot-right > .page-box { margin-left: 9px; }
.foot-right > .after-box { margin-left: 7px; }
.foot-sep { width: 1px; height: 20px; background: #d5d5d5; }
.view-btn {
  display: flex;
  align-items: center;
  justify-content: center;
  box-sizing: border-box;
}
.foot-right > .view-btn.on {
  width: 29px;
  height: 26px;
  margin-left: 6px;
  background: #cce4f7;
  border: 1px solid #99d1ff;
  border-radius: 3px;
}
.foot-right > .view-btn.plain { margin-left: 9px; }

.details {
  width: 159px;
  flex: none;
  background: #fff;
  position: relative;
  overflow: hidden;
  color: #333;
}
.detail-tabs {
  height: 30px;
  display: flex;
  align-items: center;
  gap: 15px;
  padding-left: 40px;
}
.ddl {
  width: 14px;
  height: 14px;
  border: 1px solid #666;
  font-size: 5px;
  line-height: 12px;
  text-align: center;
  color: #555;
  overflow: hidden;
  font-weight: 700;
}
.field-name {
  display: flex;
  align-items: center;
  gap: 14px;
  height: 24px;
  margin-top: 12px;
  margin-bottom: 15px;
  padding-left: 20px;
  font-size: 17px;
  color: #444;
}
.detail { height: 60px; padding-left: 19px; }
.detail-label { font-size: 18px; line-height: 24px; color: #888; }
.detail-value { font-size: 15.5px; line-height: 22px; color: #333; }
.assistant { position: absolute; right: 0; top: 91px; }

.statusbar {
  height: 28px;
  flex: none;
  display: flex;
  align-items: center;
  border-top: 1px solid #d8d8d8;
  border-bottom: 1px solid #bcc5cf;
  box-sizing: border-box;
  font-size: 15px;
}
.sql { width: 1237px; margin-left: 221px; padding-left: 5px; box-sizing: border-box; border-left: 1px solid #d8d8d8; white-space: nowrap; height: 100%; line-height: 25px; }
.warn { width: 86px; height: 100%; padding-left: 3px; box-sizing: border-box; border-left: 1px solid #d8d8d8; border-right: 1px solid #d8d8d8; display: flex; align-items: center; }
.records { width: 311px; padding-left: 5px; box-sizing: border-box; white-space: nowrap; word-spacing: 0.5px; }
.panel-btn {
  width: 28px;
  height: 26px;
  display: flex;
  align-items: center;
  justify-content: center;
  background: #cce4f7;
  border: 1px solid #99d1ff;
  border-radius: 3px;
  box-sizing: border-box;
}

.taskbar {
  height: 59px;
  flex: none;
  display: flex;
  align-items: center;
  background: linear-gradient(90deg, #d6e6f3, #d9e8f4 50%, #dfe9f5);
  position: relative;
  padding-bottom: 2px;
  box-sizing: border-box;
}
.weather { width: 574px; flex: none; box-sizing: border-box; padding-left: 24px; display: flex; align-items: center; gap: 8px; }
.weather-text { font-size: 14px; line-height: 20px; color: #333; }
.win-start { width: 50px; flex: none; display: flex; justify-content: center; }
.search {
  width: 274px;
  height: 38px;
  margin-left: 7px;
  flex: none;
  border-radius: 19px;
  background: #f1f6fc;
  border: 1px solid #c9d6e4;
  box-sizing: border-box;
  display: flex;
  align-items: center;
  padding-left: 13px;
  gap: 12px;
  font-size: 18px;
  color: #555;
  position: relative;
}
.balloons { position: absolute; right: 3px; top: -1px; }
.task-icons { display: flex; margin-left: 3px; }
.task-icon {
  width: 55px;
  height: 50px;
  display: flex;
  align-items: center;
  justify-content: center;
  position: relative;
}
.task-icon.pink { background: #fce9e9; border-radius: 4px; width: 50px; margin: 0 2.500px; }
.task-icon.open { background: #eef4fb; border-radius: 4px; width: 50px; margin: 0 2.500px; }
.task-dot { position: absolute; left: 50%; bottom: 1px; height: 3px; border-radius: 2px; }
.task-dot.grey { width: 6px; margin-left: -3px; background: #7a7f85; bottom: -2px; height: 5px; }
.task-dot.red { width: 7px; margin-left: -3.500px; background: #c4332b; }
.task-dot.blue { width: 19px; margin-left: -9.500px; background: #0078d4; }

.tray { position: absolute; right: 0; top: 0; bottom: 0; width: 350px; }
.tray > * { position: absolute; }
.t-chev { left: 3px; top: 24px; }
.t-cloud { left: 40px; top: 22px; }
.t-ime { left: 81px; top: 15px; font-size: 18px; color: #222; }
.t-wifi { left: 121px; top: 21px; }
.t-vol { left: 150px; top: 21px; }
.t-bat { left: 180px; top: 20px; }
.clock { right: 60px; top: 9px; text-align: right; font-size: 14.500px; line-height: 20px; color: #222; white-space: nowrap; }
.badge {
  left: 305px;
  top: 19px;
  width: 19px;
  height: 19px;
  border-radius: 50%;
  background: #0078d4;
  color: #fff;
  text-align: center;
  font-size: 12px;
  font-weight: 700;
  line-height: 19px;
}
.watermark {
  position: absolute;
  left: 1808px;
  top: 36px;
  font-size: 12.500px;
  color: rgba(90, 90, 90, 0.6);
  white-space: nowrap;
}
</style>
